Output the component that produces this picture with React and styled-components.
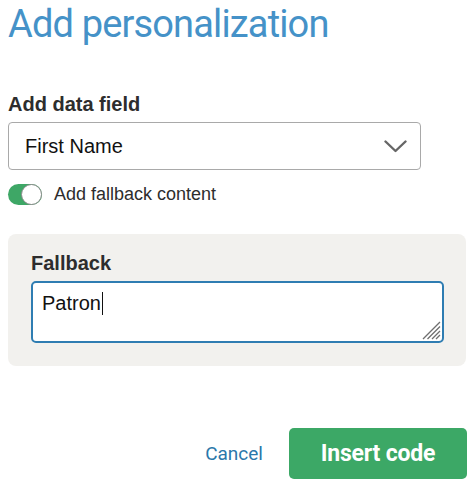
import React, { useState } from 'react'
import styled, { createGlobalStyle } from 'styled-components'

const GlobalStyle = createGlobalStyle`
  body {
    margin: 0;
    background: #fff;
    font-family: "Liberation Sans", Arial, sans-serif;
  }
`

const Page = styled.div`
  width: 474px;
  box-sizing: border-box;
  padding: 0 7px 0 8px;
`
const Title = styled.h1`
  margin: 1px 0 0;
  font-family: Roboto, "Liberation Sans", sans-serif;
  font-weight: 400;
  font-size: 38px;
  line-height: 46px;
  color: #4592c8;
  letter-spacing: -0.85px;
`
const Label = styled.div`
  font-size: 20px;
  line-height: 24px;
  font-weight: 700;
  color: #2d2d2d;
  margin-top: ${(p) => p.top || 0}px;
`
const Select = styled.div`
  margin-top: 6px;
  width: 413px;
  height: 48px;
  box-sizing: border-box;
  border: 1px solid #a9a9a9;
  border-radius: 4px;
  display: flex;
  align-items: center;
  justify-content: space-between;
  padding: 0 13px 0 16px;
  font-size: 20px;
  color: #111;
`
const ToggleRow = styled.label`
  margin-top: 14px;
  display: flex;
  align-items: center;
  gap: 12px;
  font-size: 18px;
  color: #2d2d2d;
`
const Track = styled.span`
  position: relative;
  width: 34px;
  height: 21px;
  border-radius: 11px;
  background: ${(p) => (p.on ? '#3ea766' : '#bbb')};
`
const Knob = styled.span`
  position: absolute;
  top: 0;
  left: ${(p) => (p.on ? '13px' : '0')};
  width: 21px;
  height: 21px;
  box-sizing: border-box;
  border-radius: 50%;
  background: #fff;
  border: 1.5px solid #8a8a8a;
`
const Panel = styled.div`
  margin-top: 29px;
  width: 458px;
  box-sizing: border-box;
  background: #f2f1ee;
  border-radius: 8px;
  padding: 17px 22px 23px 23px;
`
const AreaWrap = styled.div`
  position: relative;
  margin-top: 6px;
  height: 62px;
  box-sizing: border-box;
  border: 2px solid #2f7db2;
  border-radius: 5px;
  background: #fff;
  padding: 8px 9px;
  font-size: 20px;
  line-height: 24px;
  color: #111;
`
const Caret = styled.span`
  display: inline-block;
  width: 1.5px;
  height: 23px;
  background: #111;
  vertical-align: -5px;
  margin-left: 1px;
`
const Grip = styled.svg`
  position: absolute;
  right: 1px;
  bottom: 1px;
`
const Footer = styled.div`
  margin-top: 62px;
  display: flex;
  justify-content: flex-end;
  align-items: center;
  gap: 26px;
`
const LinkButton = styled.button`
  border: 0;
  background: none;
  padding: 0;
  font-family: Roboto, "Liberation Sans", sans-serif;
  font-size: 19px;
  color: #2a77aa;
  cursor: pointer;
`
const PrimaryButton = styled.button`
  width: 178px;
  height: 51px;
  border: 0;
  border-radius: 5px;
  background: #3ca866;
  color: #fff;
  font-family: Roboto, "Liberation Sans", sans-serif;
  font-weight: 700;
  font-size: 23px;
  letter-spacing: -0.2px;
  cursor: pointer;
`

export default function App () {
  const [fallback, setFallback] = useState(true)
  return (
    <Page>
      <GlobalStyle />
      <Title>Add personalization</Title>
      <Label top={45}>Add data field</Label>
      <Select>
        <span>First Name</span>
        <svg width="23" height="13" viewBox="0 0 23 13">
          <path d="M1.5 1.5 L11.5 11 L21.5 1.5" fill="none" stroke="#666" strokeWidth="2.4" strokeLinecap="round" strokeLinejoin="round" />
        </svg>
      </Select>
      <ToggleRow onClick={() => setFallback(!fallback)}>
        <Track on={fallback ? 1 : 0}><Knob on={fallback ? 1 : 0} /></Track>
        Add fallback content
      </ToggleRow>
      <Panel>
        <Label>Fallback</Label>
        <AreaWrap>
          Patron<Caret />
          <Grip width="19" height="19" viewBox="0 0 19 19">
            <path d="M1 18 L18 1 M5.5 18 L18 5.5 M10 18 L18 10 M14 18 L18 14" stroke="#6f6f6f" strokeWidth="1.3" />
          </Grip>
        </AreaWrap>
      </Panel>
      <Footer>
        <LinkButton>Cancel</LinkButton>
        <PrimaryButton>Insert code</PrimaryButton>
      </Footer>
    </Page>
  )
}
